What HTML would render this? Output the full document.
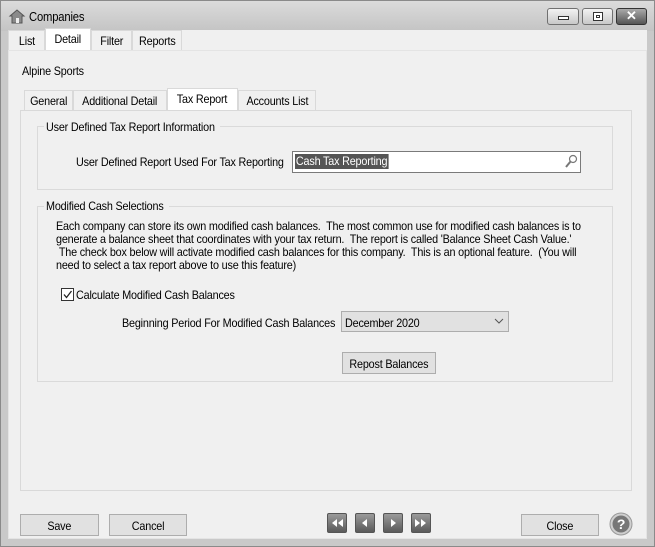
<!DOCTYPE html>
<html><head><style>
*{box-sizing:border-box;margin:0;padding:0}
body{width:655px;height:547px;overflow:hidden;background:#c9c9c9;font-family:"Liberation Sans",sans-serif;font-size:12px;color:#000;position:relative;letter-spacing:-0.2px}
.a{position:absolute;white-space:nowrap}
.t{transform:scaleX(0.9);transform-origin:0 0}
.title{left:0;top:0;width:655px;height:31px;background:linear-gradient(#dcdcdc,#c4c4c4)}
.frame{left:0;top:0;width:655px;height:547px;border:1px solid #8a8a8a;}
.client{left:8px;top:30px;width:639px;height:509px;background:#f0f0f0}
.tab{position:absolute;height:20px;border:1px solid #d9d9d9;border-bottom:none;background:#f0f0f0;padding:3px 0 0 0;text-align:center}
.tab span{display:inline-block;transform:scaleX(0.9)}
.tab.sel{background:#fff;top:-2px;height:22px}
.box{position:absolute;border:1px solid #dadada}
.legend{position:absolute;background:#f0f0f0;padding:0 2px;overflow:hidden;height:14px}
.btn{position:absolute;border:1px solid #adadad;background:#e1e1e1;text-align:center;height:22px;padding-top:4px}
.btn span{display:inline-block;transform:scaleX(0.9)}
.wbtn{position:absolute;top:8px;height:17px;border:1px solid #707070;border-radius:3px;background:linear-gradient(#f2f2f2,#c8c8c8)}
.nav{position:absolute;top:513px;width:20px;height:20px;border:1px solid #555;background:linear-gradient(#9a9a9a,#5a5a5a);border-radius:2px}
</style></head><body>
<div class="a title"></div>
<div class="a frame"></div>
<svg class="a" style="left:8px;top:8px" width="18" height="16"><path d="M2 8 L9 2 L16 8 L14 8 L14 15 L4 15 L4 8Z" fill="#8a8a8a" stroke="#555"/><rect x="8" y="10" width="3" height="5" fill="#eee"/></svg>
<div class="a t" style="left:29px;top:10px;font-size:12.5px">Companies</div>
<div class="wbtn" style="left:547px;width:32px"><div style="position:absolute;left:10px;top:7px;width:11px;height:4px;border:1px solid #333;background:#fff"></div></div>
<div class="wbtn" style="left:582px;width:31px"><div style="position:absolute;left:10px;top:3px;width:10px;height:9px;border:1px solid #333;background:#fff"><div style="margin:2px;height:3px;border:1px solid #333"></div></div></div>
<div class="wbtn" style="left:616px;width:31px;background:linear-gradient(#aaa,#555);border-color:#333"><div style="position:absolute;left:9px;top:-1px;color:#fff;font-weight:bold;font-size:13px">✕</div></div>
<div class="a client"></div>
<div class="box" style="left:8px;top:50px;width:639px;height:489px;border-color:#e4e4e4;background:#f0f0f0"></div>
<div class="a" style="left:0;top:30px;width:655px;height:20px">
 <div class="tab" style="left:8px;width:37px"><span>List</span></div>
 <div class="tab sel" style="left:45px;width:46px"><span>Detail</span></div>
 <div class="tab" style="left:91px;width:41px"><span>Filter</span></div>
 <div class="tab" style="left:132px;width:50px"><span>Reports</span></div>
</div>
<div class="a t" style="left:22px;top:64px">Alpine Sports</div>
<div class="box" style="left:20px;top:110px;width:612px;height:381px;border-color:#d9d9d9"></div>
<div class="a" style="left:0;top:90px;width:655px;height:20px">
 <div class="tab" style="left:24px;width:49px"><span>General</span></div>
 <div class="tab" style="left:73px;width:94px"><span>Additional Detail</span></div>
 <div class="tab sel" style="left:167px;width:71px"><span>Tax Report</span></div>
 <div class="tab" style="left:238px;width:78px"><span>Accounts List</span></div>
</div>
<div class="box" style="left:37px;top:126px;width:576px;height:64px"></div>
<div class="legend a" style="left:44px;top:120px;width:176px"><div class="t">User Defined Tax Report Information</div></div>
<div class="a t" style="left:76px;top:155px">User Defined Report Used For Tax Reporting</div>
<div class="a" style="left:292px;top:151px;width:289px;height:22px;border:1px solid #7a7a7a;background:#fff"></div>
<div class="a t" style="left:295px;top:154px;background:#555;color:#fff;padding:0 1px;height:15px;line-height:15px">Cash Tax Reporting</div>
<svg class="a" style="left:564px;top:154px" width="14" height="15"><circle cx="9" cy="5" r="3.5" fill="none" stroke="#777" stroke-width="1.2"/><path d="M6.5 7.5 L2 13" stroke="#777" stroke-width="2"/></svg>
<div class="box" style="left:37px;top:206px;width:576px;height:176px"></div>
<div class="legend a" style="left:44px;top:199px;width:125px"><div class="t">Modified Cash Selections</div></div>
<div class="a t" style="left:56px;top:220px;line-height:13px">Each company can store its own modified cash balances.&nbsp; The most common use for modified cash balances is to<br>generate a balance sheet that coordinates with your tax return.&nbsp; The report is called 'Balance Sheet Cash Value.'<br>&nbsp;The check box below will activate modified cash balances for this company.&nbsp; This is an optional feature.&nbsp; (You will<br>need to select a tax report above to use this feature)</div>
<div class="a" style="left:61px;top:288px;width:13px;height:13px;border:1px solid #333;background:#fff"></div>
<svg class="a" style="left:62px;top:289px" width="11" height="11"><path d="M2 5.5 L4.5 8.5 L9.5 2" fill="none" stroke="#222" stroke-width="1.3"/></svg>
<div class="a t" style="left:76px;top:288px">Calculate Modified Cash Balances</div>
<div class="a t" style="left:122px;top:316px">Beginning Period For Modified Cash Balances</div>
<div class="a" style="left:341px;top:311px;width:168px;height:21px;border:1px solid #adadad;background:#e1e1e1;padding:4px 0 0 3px"><div class="t">December 2020</div></div>
<svg class="a" style="left:494px;top:318px" width="10" height="6"><path d="M1 1 L5 5 L9 1" fill="none" stroke="#555"/></svg>
<div class="btn" style="left:342px;top:352px;width:94px"><span>Repost Balances</span></div>
<div class="btn" style="left:20px;top:514px;width:79px"><span>Save</span></div>
<div class="btn" style="left:109px;top:514px;width:78px"><span>Cancel</span></div>
<div class="btn" style="left:521px;top:514px;width:78px"><span>Close</span></div>
<div class="nav" style="left:327px"><svg width="18" height="18"><path d="M9 5 L4 9 L9 13Z M15 5 L10 9 L15 13Z" fill="#fff"/></svg></div>
<div class="nav" style="left:355px"><svg width="18" height="18"><path d="M11 5 L6 9 L11 13Z" fill="#fff"/></svg></div>
<div class="nav" style="left:383px"><svg width="18" height="18"><path d="M7 5 L12 9 L7 13Z" fill="#fff"/></svg></div>
<div class="nav" style="left:411px"><svg width="18" height="18"><path d="M3 5 L8 9 L3 13Z M9 5 L14 9 L9 13Z" fill="#fff"/></svg></div>
<svg class="a" style="left:609px;top:512px" width="24" height="24"><circle cx="12" cy="12" r="11" fill="#cfcfcf" stroke="#999"/><circle cx="12" cy="12" r="8.5" fill="#777"/><text x="12" y="17" text-anchor="middle" font-family="Liberation Sans" font-weight="bold" font-size="14" fill="#fff">?</text></svg>
</body></html>
